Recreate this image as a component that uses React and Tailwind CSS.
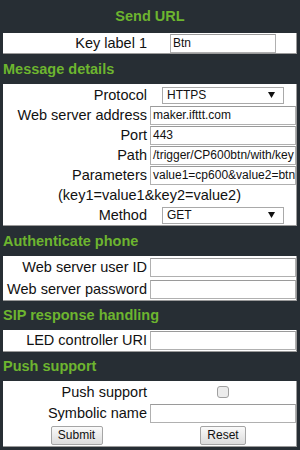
import React from "react";

const FONT = { fontFamily: '"Liberation Sans", Arial, sans-serif' };

function Title({ children, center, h }) {
  return (
    <div
      className={`flex items-center ${center ? "justify-center" : "justify-start pl-[3px]"} ${h} pt-[1px] text-[14.5px] font-bold text-[#6db52f]`}
    >
      {children}
    </div>
  );
}

function Panel({ children, className = "" }) {
  return (
    <div className={`mx-[3px] bg-white border-r border-b border-[#9a9a9a] ${className}`}>
      {children}
    </div>
  );
}

function Row({ label, children, h = "h-[21px]" }) {
  return (
    <div className={`grid grid-cols-[147px_1fr] ${h} items-center`}>
      <div className="pr-[3px] text-right text-[14.5px] leading-none text-[#111] whitespace-nowrap">
        {label}
      </div>
      <div className="flex justify-center items-center">{children}</div>
    </div>
  );
}

function TextInput({ value = "", w = "w-[146px]" }) {
  return (
    <div
      className={`${w} h-[19px] border border-[#b0b0b0] border-t-[#9a9a9a] bg-white px-[2px] text-[12px] leading-[17px] text-[#111] overflow-hidden whitespace-nowrap`}
    >
      {value}
    </div>
  );
}

function Select({ value }) {
  return (
    <div className="w-[122px] h-[17px] border border-[#a9a9a9] bg-white flex items-center justify-between pl-[4px] pr-[8px] text-[12px] text-[#111]">
      <span>{value}</span>
      <svg width="7" height="6" viewBox="0 0 7 6">
        <path d="M0 0 L7 0 L3.5 6 Z" fill="#111" />
      </svg>
    </div>
  );
}

function Button({ children, w }) {
  return (
    <div
      className={`${w} h-[19px] flex items-center justify-center rounded-[2px] border border-[#a5a5a5] bg-gradient-to-b from-[#fafafa] to-[#dcdcdc] text-[12px] text-[#111]`}
    >
      {children}
    </div>
  );
}

export default function App() {
  return (
    <div style={FONT} className="w-[300px] h-[450px] bg-[#272e34] overflow-hidden">
      <Title center h="h-[33px]">Send URL</Title>
      <Panel>
        <Row label="Key label 1" h="h-[20px]">
          <TextInput value="Btn" w="w-[106px]" />
        </Row>
      </Panel>

      <Title h="h-[30px]">Message details</Title>
      <Panel className="pt-[1px]">
        <Row label="Protocol" h="h-[20px]">
          <Select value="HTTPS" />
        </Row>
        <Row label="Web server address" h="h-[20px]">
          <TextInput value="maker.ifttt.com" />
        </Row>
        <Row label="Port" h="h-[20px]">
          <TextInput value="443" />
        </Row>
        <Row label="Path" h="h-[20px]">
          <TextInput value="/trigger/CP600btn/with/key" />
        </Row>
        <Row label="Parameters" h="h-[20px]">
          <TextInput value="value1=cp600&value2=btn" />
        </Row>
        <div className="h-[20px] flex items-center justify-center text-[14.5px] leading-none text-[#111]">
          (key1=value1&amp;key2=value2)
        </div>
        <Row label="Method" h="h-[20px]">
          <Select value="GET" />
        </Row>
      </Panel>

      <Title h="h-[30px]">Authenticate phone</Title>
      <Panel>
        <Row label="Web server user ID" h="h-[22px]">
          <TextInput />
        </Row>
        <Row label="Web server password" h="h-[22px]">
          <TextInput />
        </Row>
      </Panel>

      <Title h="h-[29px]">SIP response handling</Title>
      <Panel>
        <Row label="LED controller URI" h="h-[21px]">
          <TextInput />
        </Row>
      </Panel>

      <Title h="h-[29px]">Push support</Title>
      <Panel>
        <Row label="Push support" h="h-[22px]">
          <div className="w-[12px] h-[12px] rounded-[3px] border border-[#a0a0a0] bg-[#ececec]" />
        </Row>
        <Row label="Symbolic name" h="h-[21px]">
          <TextInput />
        </Row>
        <div className="grid grid-cols-[147px_1fr] h-[22px] items-center">
          <div className="flex justify-center">
            <Button w="w-[52px]">Submit</Button>
          </div>
          <div className="flex justify-center">
            <Button w="w-[46px]">Reset</Button>
          </div>
        </div>
      </Panel>
    </div>
  );
}
